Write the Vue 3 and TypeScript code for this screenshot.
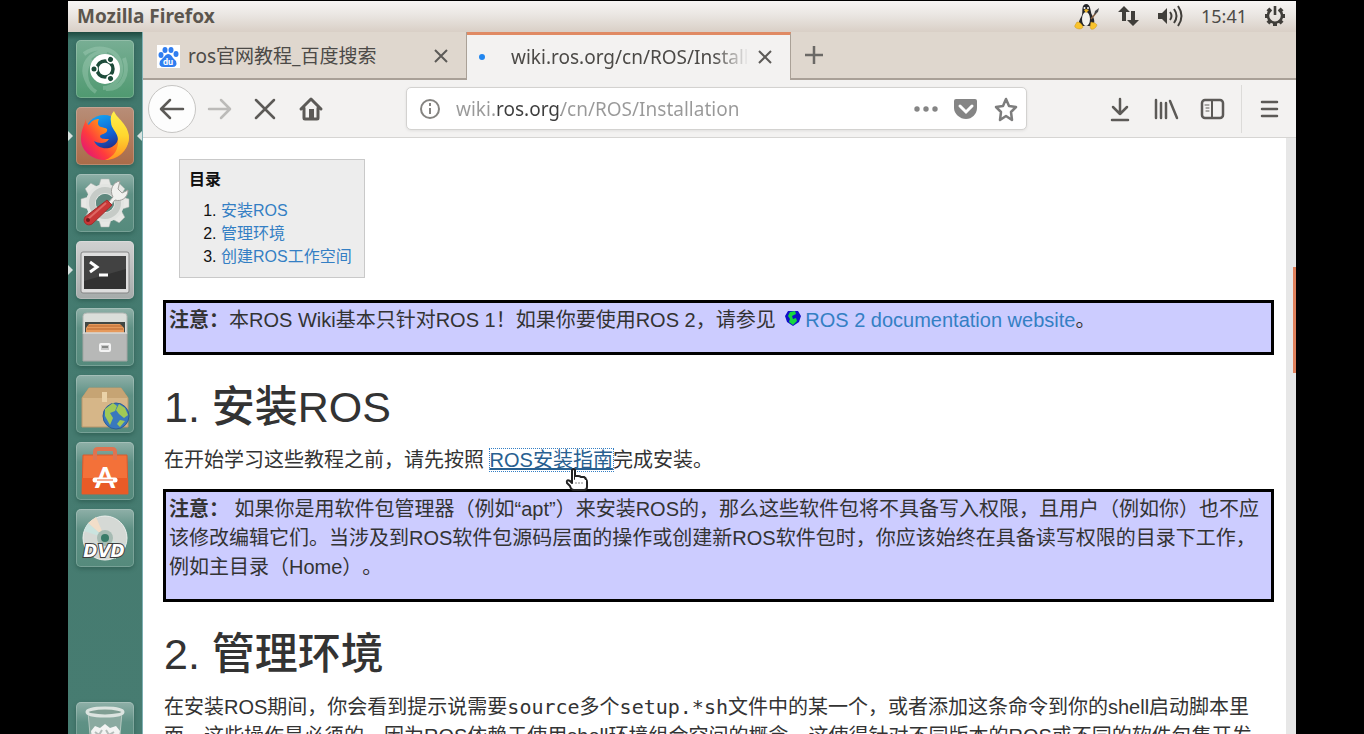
<script setup lang="ts">
import { ref } from 'vue'

interface TocEntry {
  id: string
  label: string
}

const toc: TocEntry[] = [
  { id: 'install', label: '安装ROS' },
  { id: 'env', label: '管理环境' },
  { id: 'workspace', label: '创建ROS工作空间' },
]

const address = ref('wiki.ros.org/cn/ROS/Installation')
const gearTeeth = [0, 45, 90, 135, 180, 225, 270, 315]
</script>

<template>
  <div class="desktop">
    <header class="panel">
      <span class="panel-title">Mozilla Firefox</span>
      <div class="indicators">
        <button type="button" aria-label="Input method">
          <svg width="28" height="28" viewBox="0 0 28 28">
            <path d="M7 24c-3-4 1-8 2-11 1-4-1-10 4-11 5 0 4 7 6 11 2 3 4 8 0 11z" fill="#25262a" />
            <ellipse cx="13" cy="17" rx="4" ry="7" fill="#f2f1ee" />
            <circle cx="11.500" cy="6" r="1" fill="#fff" />
            <circle cx="15" cy="6" r="1" fill="#fff" />
            <path d="M11 8l2-1 3 1-3 3z" fill="#edb62b" />
            <path d="M4 20c3 0 5 2 6 5-1 3-7 2-8 0-1-1 1-3 2-5zM17 25l1-5c2 1 4 0 6 3-1 3-4 5-6 4z" fill="#f9c32c" stroke="#c9931d" stroke-width=".5" />
            <path d="M18 17l5-6" stroke="#8b6241" stroke-width="1.500" />
            <path d="M21 13l1-4 4-3-1 4z" fill="#45464a" />
          </svg>
        </button>
        <button type="button" aria-label="Network">
          <svg width="24" height="24" viewBox="0 0 24 24" fill="#403e3a">
            <path d="M7 2l6 6H9v9H5V8H1zM16 22l-6-6h4V7h4v9h4z" />
          </svg>
        </button>
        <button type="button" aria-label="Sound">
          <svg width="28" height="24" viewBox="0 0 28 24">
            <path d="M1 9h4l5-5v16l-5-5H1z" fill="#403e3a" />
            <path d="M13 8q3 4 0 8M17 5q5 7 0 14M21 2q7 10 0 20" fill="none" stroke="#403e3a" stroke-width="2" />
          </svg>
        </button>
        <time>15:41</time>
        <button type="button" aria-label="Session">
          <svg width="24" height="24" viewBox="0 0 24 24">
            <g fill="#403e3a">
              <rect v-for="a in gearTeeth.slice(1)" :key="a" x="10" y="2" width="4" height="4" :transform="`rotate(${a} 12 12)`" />
            </g>
            <path d="M8 6a7 7 0 1 0 8 0" fill="none" stroke="#403e3a" stroke-width="2.500" />
            <path d="M12 2v9" stroke="#403e3a" stroke-width="2.600" />
          </svg>
        </button>
      </div>
    </header>

    <div class="workspace">
      <nav class="launcher" aria-label="Launcher">
        <button type="button" class="tile tile-dash" aria-label="Dash">
          <svg viewBox="0 0 58 58">
            <g fill="none" stroke="#b9dfc9" stroke-opacity=".3" stroke-width="4">
              <path d="M8 14c14-10 34-6 37 12 2 12-8 22-18 22M12 43C2 25 15 10 31 12M20 52C7 44 8 26 16 20M30 49c15 1 24-14 18-31" />
            </g>
            <circle cx="29" cy="29" r="15" fill="#fff" />
            <circle cx="29" cy="29" r="8" fill="none" stroke="#1d4b3a" stroke-width="3.500" />
            <g v-for="a in [30, 150, 270]" :key="a" :transform="`rotate(${a} 29 29)`">
              <circle cx="29" cy="18" r="4" fill="#fff" />
              <circle cx="29" cy="18" r="2.500" fill="#1d4b3a" />
            </g>
          </svg>
        </button>

        <button type="button" class="tile tile-firefox running active" aria-label="Firefox">
          <svg viewBox="0 0 58 58">
            <defs>
              <linearGradient id="fox" x1="0" y1=".8" x2="1" y2=".1">
                <stop offset="0" stop-color="#e0147a" />
                <stop offset=".3" stop-color="#ff3b3d" />
                <stop offset=".6" stop-color="#ff8b1b" />
                <stop offset="1" stop-color="#ffe13e" />
              </linearGradient>
              <linearGradient id="globe" x1=".2" y1="0" x2=".6" y2="1">
                <stop offset="0" stop-color="#12a8f5" />
                <stop offset=".6" stop-color="#105ed0" />
                <stop offset="1" stop-color="#2c2374" />
              </linearGradient>
              <linearGradient id="tail" x1=".5" y1="0" x2=".5" y2="1">
                <stop offset="0" stop-color="#fff04a" />
                <stop offset=".5" stop-color="#ffd72f" />
                <stop offset="1" stop-color="#ff9421" />
              </linearGradient>
            </defs>
            <circle cx="28" cy="27" r="19" fill="url(#globe)" />
            <path d="M10 12c0 4 1 5 3 6 2-4 6-6 10-6-2 4-1 7 2 8 4 1 7 1 6 4s-6 3-7 5c0 3 4 3 9 3-4 6-11 4-15 2 4 9 18 10 23 1 3-7-1-13-3-16 7-3 15 4 15 12-1 13-11 22-24 22C15 53 5 43 5 32c0-9 3-13 5-20z" fill="url(#fox)" />
            <path d="M38 4c2 7 15 13 15 27-1 12-11 22-24 22 9-3 14-11 13-21-1-8-7-10-7-17-1-4 0-8 3-11z" fill="url(#tail)" />
          </svg>
        </button>

        <button type="button" class="tile" aria-label="System Settings">
          <svg viewBox="0 0 58 58">
            <g fill="#e7e8e5" stroke="#aeb4b0" stroke-width=".5">
              <path v-for="a in gearTeeth" :key="a" d="M22 15l3-10h8l3 10z" :transform="`rotate(${a} 29 29)`" />
            </g>
            <circle cx="29" cy="29" r="14" fill="none" stroke="#e2e4e1" stroke-width="10" />
            <circle cx="29" cy="29" r="13" fill="none" stroke="#c6cbc7" stroke-width="6" />
            <circle cx="29" cy="29" r="9" fill="#5f887e" />
            <path d="M29 32l8-9c-4-7 0-15 7-16l-2 8 4 4 6-3c0 8-7 12-13 10L32 35z" fill="#f1f1ee" stroke="#a0a09c" />
            <path d="M31 26l5 5-20 19c-5 3-10-2-7-7z" fill="#c83737" stroke="#9e2f2c" />
            <path d="M30 29L12 45" stroke="#dd6864" stroke-width="2" />
            <circle cx="12" cy="46" r="2" fill="#6e1c1c" />
          </svg>
        </button>

        <button type="button" class="tile tile-terminal running" aria-label="Terminal">
          <svg viewBox="0 0 58 58">
            <rect x="5" y="11" width="48" height="41" rx="2" fill="#dedede" stroke="#858585" />
            <rect x="8" y="15" width="42" height="33" fill="#323232" />
            <path d="M8 15h42v13L8 40z" fill="#424242" />
            <path d="M14 21l7 5-7 5M23 34h9" fill="none" stroke="#fff" stroke-width="3" />
          </svg>
        </button>

        <button type="button" class="tile" aria-label="Files">
          <svg viewBox="0 0 58 58">
            <path d="M7 8q0-3 4-3h36q4 0 4 3v18H7z" fill="#dbdeda" stroke="#b3b7b4" />
            <path d="M9 14h40v12H9z" fill="#424744" />
            <path d="M10 20l3-4h31l4 4v6H10z" fill="#e69a5c" />
            <path d="M11 21h36M12 18h34" stroke="#b8652c" />
            <path d="M7 25h44v28H7z" fill="#b7b8b7" stroke="#a3a5a3" />
            <path d="M7 25h44" stroke="#f3f3f1" />
            <rect x="24" y="36" width="10" height="7" rx="1" fill="#c9c9c9" stroke="#f3f3f3" stroke-width="2" />
            <path d="M26 39h6" stroke="#868886" stroke-width="2" />
          </svg>
        </button>

        <button type="button" class="tile" aria-label="Package">
          <svg viewBox="0 0 58 58">
            <path d="M13 13h32l7 10v29H6V23z" fill="#d6b688" stroke="#b8966a" />
            <path d="M6 23l7-10h32l7 10z" fill="#c6a474" />
            <path d="M26 17h5v10h-5z" fill="#ead2a8" />
            <circle cx="40" cy="41" r="13" fill="#3978be" stroke="#2b5b96" />
            <path d="M29 34l8-6 4 3-2 5-5 2 3 5-3 7-5-9zM43 29l6 4 3 7-4 3-5-4-3-4zM44 45l5 1-5 6-3-3z" fill="#a0c956" />
          </svg>
        </button>

        <button type="button" class="tile" aria-label="Ubuntu Software">
          <svg viewBox="0 0 58 58">
            <path d="M7 13h44l1 39H6z" fill="#f37139" stroke="#d85a2e" />
            <path d="M6 36h46v16H6z" fill="#e95b26" />
            <path d="M19 18V10q0-3 3-3h14q3 0 3 3v8" fill="none" stroke="#df7350" stroke-width="4" />
            <text x="29" y="46" text-anchor="middle" class="bag-letter">A</text>
            <path d="M19 38h20" stroke="#fff" stroke-width="5" stroke-linecap="round" />
            <path d="M21 38h16" stroke="#e95b28" stroke-width="1" />
          </svg>
        </button>

        <button type="button" class="tile" aria-label="DVD">
          <svg viewBox="0 0 58 58">
            <circle cx="29" cy="29" r="22" fill="#d5d9d5" stroke="#edf0ed" />
            <path d="M29 29L12 14l8-6zM29 29l17 15-7 6z" fill="#f2dec9" />
            <path d="M29 29L8 22l4-8zM29 29l21 8-4 7z" fill="#cbe4df" />
            <circle cx="29" cy="29" r="8" fill="#a6bbb3" />
            <circle cx="29" cy="29" r="4" fill="#397b69" />
            <text x="28" y="48" text-anchor="middle" class="disc-label">DVD</text>
          </svg>
        </button>

        <button type="button" class="tile tile-trash" aria-label="Trash">
          <svg viewBox="0 0 58 58">
            <path d="M12 10l4 45h26l4-45z" fill="#8aaaa0" stroke="#b4c8c0" />
            <path d="M15 29l4-5 5 2 5-4 5 4 6-2 4 5-4 22H18z" fill="#f3f4f3" />
            <path d="M19 30l4 3 3-5M30 28l3 5 5-3M22 40l5-3M33 38l5 4" fill="none" stroke="#b4bcb9" stroke-width="2" />
            <ellipse cx="29" cy="10" rx="18" ry="4" fill="#809e93" stroke="#dce4e0" stroke-width="3" />
          </svg>
        </button>
      </nav>

      <div class="browser">
        <div class="tabs">
          <div class="tab">
            <svg class="favicon" width="23" height="23" viewBox="0 0 23 23">
              <rect width="23" height="23" fill="#fff" />
              <g fill="#2f7df0">
                <ellipse cx="4" cy="10" rx="2.500" ry="3" />
                <ellipse cx="8" cy="5" rx="2.500" ry="3" />
                <ellipse cx="14" cy="5" rx="2.500" ry="3" />
                <ellipse cx="19" cy="9" rx="2.500" ry="3" />
                <path d="M11 9q3 0 5 4l3 3q2 6-4 6H7q-6 0-4-6l4-4q2-3 4-3z" />
              </g>
              <text x="11" y="20" text-anchor="middle" class="favicon-text">du</text>
            </svg>
            <button type="button" class="tab-label">ros官网教程_百度搜索</button>
            <button type="button" class="tab-close" aria-label="Close tab">
              <svg width="16" height="16" viewBox="0 0 16 16"><path d="M2 2l12 12M14 2L2 14" /></svg>
            </button>
          </div>
          <div class="tab current">
            <span class="loading"></span>
            <button type="button" class="tab-label faded">wiki.ros.org/cn/ROS/Installation</button>
            <button type="button" class="tab-close" aria-label="Close tab">
              <svg width="16" height="16" viewBox="0 0 16 16"><path d="M2 2l12 12M14 2L2 14" /></svg>
            </button>
          </div>
          <button type="button" class="new-tab" aria-label="New tab">
            <svg width="20" height="20" viewBox="0 0 20 20"><path d="M10 1v18M1 10h18" /></svg>
          </button>
        </div>

        <div class="toolbar">
          <button type="button" class="tool back" aria-label="Back">
            <svg width="26" height="26" viewBox="0 0 26 26"><path d="M24 13H3M11 4l-9 9 9 9" /></svg>
          </button>
          <button type="button" class="tool" aria-label="Forward" disabled>
            <svg width="26" height="26" viewBox="0 0 26 26"><path d="M3 13h20M15 4l9 9-9 9" /></svg>
          </button>
          <button type="button" class="tool" aria-label="Stop">
            <svg width="26" height="26" viewBox="0 0 26 26"><path d="M4 4l18 18M22 4L4 22" /></svg>
          </button>
          <button type="button" class="tool" aria-label="Home">
            <svg width="26" height="26" viewBox="0 0 26 26"><path d="M3 13L13 3l10 10M6 12v10q0 1 1 1h12q1 0 1-1V12" stroke-width="3" /><path d="M11 13h5v10h-5z" fill="#5c5a57" stroke="none" /></svg>
          </button>

          <div class="address">
            <svg width="24" height="24" viewBox="0 0 24 24" class="info">
              <circle cx="12" cy="12" r="9" />
              <path d="M12 11v6M12 6v3" />
            </svg>
            <input v-model="address" type="text" aria-label="Address" spellcheck="false" />
            <button type="button" aria-label="Page actions">
              <svg width="26" height="26" viewBox="0 0 26 26" fill="#858585"><circle cx="5" cy="13" r="2.700" /><circle cx="14" cy="13" r="2.700" /><circle cx="23" cy="13" r="2.700" /></svg>
            </button>
            <button type="button" aria-label="Save to Pocket">
              <svg width="26" height="26" viewBox="0 0 26 26"><path d="M4 3h19q2 0 2 2v7c0 6-5 11-11 11S2 18 2 12V5q0-2 2-2z" fill="#858585" /><path d="M8 10l6 6 6-6" fill="none" stroke="#fff" stroke-width="3" stroke-linecap="round" /></svg>
            </button>
            <button type="button" aria-label="Bookmark">
              <svg width="26" height="26" viewBox="0 0 26 26"><path d="M14 3l3 7 7 1-5 5 1 8-6-4-6 4 1-8-5-5 7-1z" fill="none" stroke="#7d7d7d" stroke-width="2.500" stroke-linejoin="round" /></svg>
            </button>
          </div>

          <button type="button" class="tool" aria-label="Downloads">
            <svg width="26" height="26" viewBox="0 0 26 26"><path d="M13 3v15M6 11l7 7 7-7M5 24h16" /></svg>
          </button>
          <button type="button" class="tool" aria-label="Library">
            <svg width="26" height="26" viewBox="0 0 26 26"><path d="M3 4v18M8 7v15M13 7v15M17 5l7 17" /></svg>
          </button>
          <button type="button" class="tool" aria-label="Sidebars">
            <svg width="26" height="26" viewBox="0 0 26 26"><rect x="3" y="4" width="21" height="18" rx="3" /><path d="M13 4v18" stroke-width="2" /><path d="M6 9h4M7 12h3M7 15h3" stroke-width="1" /></svg>
          </button>
          <span class="divider"></span>
          <button type="button" class="tool" aria-label="Menu">
            <svg width="26" height="26" viewBox="0 0 26 26"><path d="M6 6h15M6 13h15M6 20h15" /></svg>
          </button>
        </div>

        <div class="viewport">
          <main class="page">
            <section class="toc">
              <p>目录</p>
              <ol>
                <li v-for="entry in toc" :key="entry.id"><a :href="`#${entry.id}`">{{ entry.label }}</a></li>
              </ol>
            </section>

            <div class="note">
              <strong>注意：</strong>本ROS Wiki基本只针对ROS 1！如果你要使用ROS 2，请参见
              <a href="#ros2"><svg class="globe" width="16" height="17" viewBox="0 0 16 17"><path d="M3 1h10l3 5-2 6-6 4-6-4-2-6z" fill="#1010c8" /><path d="M5 2l5-1 1 3-4 2 1 3 3-1 1 3-4 4-4-3 1-3-2-3z" fill="#16d83e" /></svg>ROS 2 documentation website</a>。
            </div>

            <h1 id="install">1. 安装ROS</h1>
            <p class="text">
              在开始学习这些教程之前，请先按照
              <a href="#guide" class="hovered">ROS安装指南<svg class="cursor" width="24" height="26" viewBox="0 0 24 26"><path d="M7 3q1-2 3 0v9h9q3 0 3 3v5q0 3-3 3H9q-3 0-4-4l-3-3q-1-4 3-2l2 2z" fill="#fff" stroke="#222" stroke-width="2" stroke-linejoin="round" /><path d="M10 9h3q2 0 3 1h3q2 1 2 3v2H10z" fill="#fff" /><path d="M10 9h3q2 0 3 1h3q2 1 2 3" fill="none" stroke="#222" stroke-width="2" /><path d="M10 16h9" stroke="#888" stroke-dasharray="2 1" /></svg></a>完成安装。
            </p>

            <div class="note">
              <strong>注意：</strong> 如果你是用软件包管理器（例如“apt”）来安装ROS的，那么这些软件包将不具备写入权限，且用户（例如你）也不应该修改编辑它们。当涉及到ROS软件包源码层面的操作或创建新ROS软件包时，你应该始终在具备读写权限的目录下工作，例如主目录（Home）。
            </div>

            <h1 id="env">2. 管理环境</h1>
            <p class="text">
              在安装ROS期间，你会看到提示说需要<code>source</code>多个<code>setup.*sh</code>文件中的某一个，或者添加这条命令到你的shell启动脚本里<br />面。这些操作是必须的，因为ROS依赖于使用shell环境组合空间的概念。这使得针对不同版本的ROS或不同的软件包集开发
            </p>
          </main>
          <div class="scrollbar"><span class="thumb"></span></div>
        </div>
      </div>
    </div>
  </div>
</template>

<style>
html,
body {
  background: #000;
  overflow: hidden;
}
</style>

<style scoped>
* {
  box-sizing: border-box;
}

button {
  padding: 0;
  border: 0;
  background: none;
  color: inherit;
  font: inherit;
}

svg {
  display: block;
}

.desktop {
  display: flex;
  flex-direction: column;
  height: 100vh;
  padding: 1px 68px 0;
  overflow: hidden;
  background: #000;
  color: #4c4a47;
  font-family: "Noto Sans", "Noto Sans CJK SC", sans-serif;
}

.panel {
  display: flex;
  flex: none;
  align-items: center;
  justify-content: space-between;
  height: 31px;
  padding: 0 9px 2px;
  background: linear-gradient(#f7f5f4, #eae6e2 45%, #d9cfc6);
}

.panel-title {
  color: #5c564e;
  font-size: 19px;
  font-weight: 700;
}

.indicators {
  display: flex;
  align-items: center;
  gap: 16px;
  font-size: 18px;
}

.workspace {
  display: flex;
  flex: 1;
  min-height: 0;
}

.launcher {
  display: flex;
  flex: none;
  flex-direction: column;
  align-items: center;
  gap: 9px;
  width: 75px;
  padding-top: 8px;
  overflow: hidden;
  border-right: 1px solid #7fb0b4;
  background: linear-gradient(#1e4a40, #3d7469 8px, #437a6f 100px, #477c71);
}

.tile {
  position: relative;
  flex: none;
  width: 58px;
  height: 58px;
  border-radius: 5px;
  background: linear-gradient(#8fb0a8, #5f9185 35%, #558a7c);
  box-shadow: inset 0 0 0 1px rgba(255, 255, 255, 0.2), 0 2px 4px rgba(20, 60, 50, 0.4);
}

.tile-dash {
  background: linear-gradient(#78ae94, #4f9970);
}

.tile-firefox {
  background: linear-gradient(#b88e78, #aa6b48);
}

.tile-terminal {
  background: linear-gradient(#d0d1d1, #a5abaa);
}

.tile-trash {
  margin-top: 126px;
}

.running::before,
.active::after {
  position: absolute;
  top: 24px;
  border: 5px solid transparent;
  content: "";
}

.running::before {
  left: -8px;
  border-left-color: #d7e2df;
  border-right-width: 0;
}

.active::after {
  right: -8px;
  border-right-color: #d7e2df;
  border-left-width: 0;
}

.bag-letter {
  fill: #fff;
  font: 700 29px Lato, sans-serif;
}

.disc-label {
  fill: #fff;
  stroke: #3d3d3d;
  stroke-width: 2px;
  paint-order: stroke;
  font: italic 700 17px "DejaVu Sans", sans-serif;
}

.browser {
  display: flex;
  flex: 1;
  flex-direction: column;
  min-width: 0;
  background: #fff;
}

.tabs {
  display: flex;
  flex: none;
  height: 48px;
  border-bottom: 2px solid #a9a097;
  background: #dfd7ce;
}

.tab {
  display: flex;
  flex: 0 1 324px;
  align-items: center;
  min-width: 0;
  padding: 2px 17px 0 14px;
  border-right: 1px solid #aaa197;
}

.tab.current {
  height: 48px;
  padding: 0 17px 2px 12px;
  border-top: 3px solid #e08a64;
  background: #f3f2f1;
}

.favicon {
  flex: none;
  margin-right: 8px;
}

.favicon-text {
  fill: #fff;
  font: 700 9px Roboto, sans-serif;
}

.loading {
  flex: none;
  width: 6px;
  height: 6px;
  margin-right: 26px;
  border-radius: 50%;
  background: #2186ef;
}

.tab-label {
  flex: 1;
  min-width: 0;
  overflow: hidden;
  font-size: 19px;
  line-height: 28px;
  text-align: left;
  white-space: nowrap;
}

.faded {
  mask-image: linear-gradient(to right, #000 85%, transparent);
}

.tab-close,
.new-tab {
  flex: none;
  fill: none;
  stroke: #5c5a57;
  stroke-width: 2;
}

.tab-close {
  margin-left: 8px;
}

.new-tab {
  padding: 0 13px;
  stroke: #6b6966;
}

.new-tab path {
  stroke-width: 2.5;
}

.toolbar {
  display: flex;
  flex: none;
  align-items: center;
  height: 58px;
  padding: 0 4px 0 5px;
  border-bottom: 1px solid #d6d5d3;
  background: #f3f2f1;
}

.tool {
  display: grid;
  flex: none;
  place-items: center;
  width: 46px;
  height: 46px;
  fill: none;
  stroke: #5c5a57;
  stroke-width: 2.5;
  stroke-linecap: round;
  stroke-linejoin: round;
}

.tool:disabled {
  stroke: #bcbbb9;
}

.back {
  width: 48px;
  height: 48px;
  border: 1px solid #c6c5c3;
  border-radius: 50%;
  background: #fdfdfd;
}

.address {
  display: flex;
  flex: 1;
  align-items: center;
  gap: 14px;
  min-width: 0;
  height: 43px;
  margin: 0 70px 0 72px;
  padding: 0 8px 0 11px;
  border: 1px solid #d3d2d0;
  border-radius: 5px;
  background: #fff;
  box-shadow: 0 1px 3px rgba(0, 0, 0, 0.08);
}

.info {
  flex: none;
  fill: none;
  stroke: #858481;
  stroke-width: 2;
}

.address input {
  flex: 1;
  min-width: 0;
  padding: 0;
  border: 0;
  outline: 0;
  background: linear-gradient(to right, #999 40px, #3d3d3d 40px, #3d3d3d 105px, #999 105px);
  background-clip: text;
  color: transparent;
  font-family: "Noto Sans", sans-serif;
  font-size: 19px;
  line-height: 28px;
}

.divider {
  flex: none;
  width: 1px;
  height: 48px;
  margin: 0 4px 0 6px;
  background: #dcdbd9;
}

.viewport {
  display: flex;
  flex: 1;
  min-height: 0;
  overflow: hidden;
}

.page {
  flex: 1;
  min-width: 0;
  padding: 21px 12px 0 20px;
  color: #333;
  font-family: "Liberation Sans", "Noto Sans CJK SC", sans-serif;
  font-size: 20px;
  line-height: 29px;
  text-spacing-trim: space-all;
}

.page a {
  color: #347fc4;
  text-decoration: none;
}

.toc {
  width: fit-content;
  margin-left: 16px;
  padding: 8px 12px 9px 9px;
  border: 1px solid #c9c9c9;
  background: #ededed;
  color: #111;
  font-size: 16px;
  line-height: 23px;
}

.toc p {
  margin: 0 0 8px;
  font-weight: 700;
}

.toc ol {
  margin: 0;
  padding-left: 32px;
}

.note {
  padding: 3px 3px 17px;
  border: 3px solid #000;
  background: #ccf;
}

.toc + .note {
  margin-top: 22px;
}

.globe {
  display: inline-block;
  margin: 0 4px;
}

h1 {
  margin: 29px 1px 15px;
  font-size: 43px;
  font-weight: 500;
  line-height: 47px;
}

.text {
  margin: 0 1px 14px;
}

.page .hovered {
  position: relative;
  outline: 1px dotted #347fc4;
  color: #286090;
  text-decoration: underline;
}

.cursor {
  position: absolute;
  top: 18px;
  right: 24px;
}

code {
  font-family: "DejaVu Sans Mono", monospace;
  font-size: 20px;
}

.scrollbar {
  flex: none;
  width: 10px;
  padding-top: 129px;
  background: #e7e7e7;
}

.thumb {
  display: block;
  width: 3px;
  height: 106px;
  margin-left: auto;
  background: #df805b;
}
</style>
